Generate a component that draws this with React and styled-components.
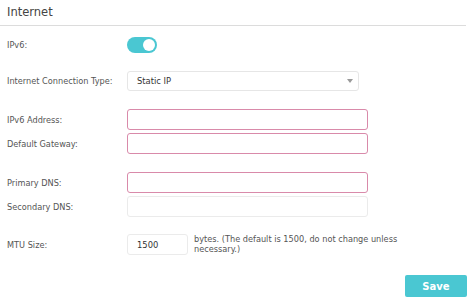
import styled, { createGlobalStyle } from "styled-components";

const Global = createGlobalStyle`
  body {
    margin: 0;
    background: #fff;
    font-family: "DejaVu Sans", Verdana, sans-serif;
  }
`;

const fields = [
  { label: "IPv6 Address:", gap: 18, error: true },
  { label: "Default Gateway:", gap: 3, error: true },
  { label: "Primary DNS:", gap: 18, error: true },
  { label: "Secondary DNS:", gap: 3, error: false },
];

const App = () => {
  return (
    <Page>
      <Global />
      <Header>
        <h1>Internet</h1>
      </Header>
      <Form>
        <Row $gap={11} $h={16}>
          <Label>IPv6:</Label>
          <Toggle>
            <span className="knob" />
          </Toggle>
        </Row>
        <Row $gap={18} $h={20}>
          <Label>Internet Connection Type:</Label>
          <Select>
            <span>Static IP</span>
            <span className="arrow" />
          </Select>
        </Row>
        {fields.map((f) => (
          <Row key={f.label} $gap={f.gap} $h={21}>
            <Label>{f.label}</Label>
            <Input $error={f.error} />
          </Row>
        ))}
        <Row $gap={17} $h={21}>
          <Label>MTU Size:</Label>
          <Input $width={61}>1500</Input>
          <Note>bytes. (The default is 1500, do not change unless necessary.)</Note>
        </Row>
      </Form>
      <Footer>
        <SaveButton>Save</SaveButton>
      </Footer>
    </Page>
  );
};

const Page = styled.div`
  width: 474px;
  height: 303px;
  overflow: hidden;
`;

const Header = styled.div`
  width: 466px;
  height: 26px;
  box-sizing: border-box;
  border-bottom: 1px solid #dcdcdc;
  padding: 6px 0 0 7px;
  h1 {
    margin: 0;
    font-size: 11.5px;
    font-weight: normal;
    color: #444;
    line-height: 13px;
  }
`;

const Form = styled.div`
  display: flex;
  flex-direction: column;
  padding-left: 7px;
`;

const Row = styled.div`
  display: flex;
  align-items: center;
  margin-top: ${(p) => p.$gap}px;
  height: ${(p) => p.$h}px;
`;

const Label = styled.div`
  width: 120px;
  flex-shrink: 0;
  font-size: 8.2px;
  line-height: 10px;
  color: #555;
`;

const Toggle = styled.div`
  width: 30px;
  height: 16px;
  border-radius: 8px;
  background: #4ac7d2;
  position: relative;
  .knob {
    position: absolute;
    right: 2px;
    top: 2px;
    width: 12px;
    height: 12px;
    border-radius: 50%;
    background: #fff;
  }
`;

const Select = styled.div`
  width: 232px;
  height: 20px;
  box-sizing: border-box;
  border: 1px solid #e6e6e6;
  border-radius: 3px;
  display: flex;
  align-items: center;
  justify-content: space-between;
  padding: 0 4px 0 9px;
  font-size: 8.4px;
  line-height: 10px;
  color: #333;
  .arrow {
    width: 0;
    height: 0;
    border-left: 3.5px solid transparent;
    border-right: 3.5px solid transparent;
    border-top: 4px solid #9a9a9a;
    margin-right: 1px;
  }
`;

const Input = styled.div`
  width: ${(p) => p.$width || 241}px;
  height: 21px;
  flex-shrink: 0;
  box-sizing: border-box;
  border: 1px solid ${(p) => (p.$error ? "#d98aaa" : "#ebebeb")};
  border-radius: 3px;
  display: flex;
  align-items: center;
  padding-left: 9px;
  font-size: 8.4px;
  line-height: 10px;
  color: #333;
`;

const Note = styled.div`
  width: 220px;
  margin-left: 6px;
  align-self: flex-start;
  font-size: 8.2px;
  line-height: 10px;
  color: #555;
`;

const Footer = styled.div`
  display: flex;
  justify-content: flex-end;
  padding-right: 7px;
  margin-top: 20px;
`;

const SaveButton = styled.button`
  width: 62px;
  height: 22px;
  border: none;
  border-radius: 2px;
  background: #4ac7d2;
  color: #fff;
  font-family: "DejaVu Sans", Verdana, sans-serif;
  font-weight: bold;
  font-size: 10px;
  padding: 0;
`;

export default App;
